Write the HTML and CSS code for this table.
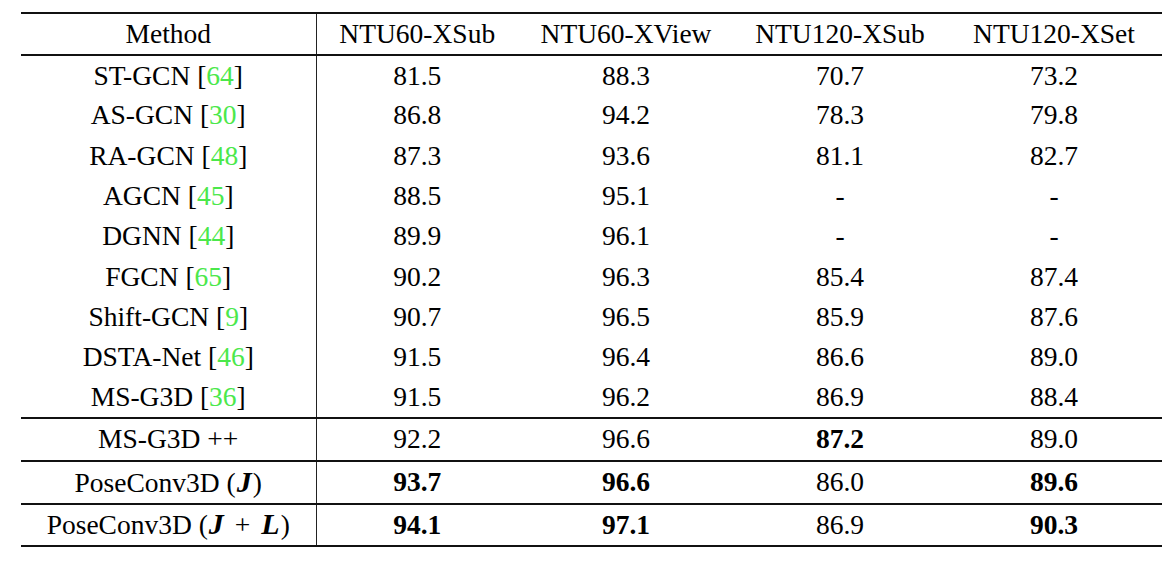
FILE: index.html
```html
<!DOCTYPE html>
<html lang="en">
<head>
    <meta charset="UTF-8">
    <title>Results on NTU RGB+D</title>
    <link rel="stylesheet" href="styles.css">
</head>
<body>
    <table class="results">
        <colgroup>
            <col class="col-method">
            <col class="col-num">
            <col class="col-wide">
            <col class="col-wide2">
            <col>
        </colgroup>
        <thead>
            <tr>
                <th class="method">Method</th>
                <th>NTU60-XSub</th>
                <th>NTU60-XView</th>
                <th>NTU120-XSub</th>
                <th>NTU120-XSet</th>
            </tr>
        </thead>
        <tbody class="prior">
            <tr><td class="method">ST-GCN [<span class="cite">64</span>]</td><td>81.5</td><td>88.3</td><td>70.7</td><td>73.2</td></tr>
            <tr><td class="method">AS-GCN [<span class="cite">30</span>]</td><td>86.8</td><td>94.2</td><td>78.3</td><td>79.8</td></tr>
            <tr><td class="method">RA-GCN [<span class="cite">48</span>]</td><td>87.3</td><td>93.6</td><td>81.1</td><td>82.7</td></tr>
            <tr><td class="method">AGCN [<span class="cite">45</span>]</td><td>88.5</td><td>95.1</td><td>-</td><td>-</td></tr>
            <tr><td class="method">DGNN [<span class="cite">44</span>]</td><td>89.9</td><td>96.1</td><td>-</td><td>-</td></tr>
            <tr><td class="method">FGCN [<span class="cite">65</span>]</td><td>90.2</td><td>96.3</td><td>85.4</td><td>87.4</td></tr>
            <tr><td class="method">Shift-GCN [<span class="cite">9</span>]</td><td>90.7</td><td>96.5</td><td>85.9</td><td>87.6</td></tr>
            <tr><td class="method">DSTA-Net [<span class="cite">46</span>]</td><td>91.5</td><td>96.4</td><td>86.6</td><td>89.0</td></tr>
            <tr><td class="method">MS-G3D [<span class="cite">36</span>]</td><td>91.5</td><td>96.2</td><td>86.9</td><td>88.4</td></tr>
        </tbody>
        <tbody class="ours">
            <tr class="sep-thin first"><td class="method">MS-G3D ++</td><td>92.2</td><td>96.6</td><td><b>87.2</b></td><td>89.0</td></tr>
            <tr class="sep-thin"><td class="method">PoseConv3D (<b class="math">J</b>)</td><td><b>93.7</b></td><td><b>96.6</b></td><td>86.0</td><td><b>89.6</b></td></tr>
            <tr class="sep-thick last"><td class="method">PoseConv3D (<b class="math">J</b><span class="op">+</span><b class="math">L</b>)</td><td><b>94.1</b></td><td><b>97.1</b></td><td>86.9</td><td><b>90.3</b></td></tr>
        </tbody>
    </table>
</body>
</html>
```

FILE: styles.css
```css
* {
    margin: 0;
    padding: 0;
    box-sizing: border-box;
}

body {
    background: #ffffff;
    color: #000000;
    font-family: 'Liberation Serif', 'Times New Roman', serif;
    font-size: 27.5px;
    padding: 12px 0 0 21px;
    overflow: hidden;
}

.results {
    border-collapse: collapse;
    width: 1141px;
    table-layout: fixed;
    border-top: 2.5px solid #111;
    border-bottom: 2.5px solid #111;
}

.col-method { width: 295px; }
.col-num { width: 202px; }
.col-wide { width: 216px; }
.col-wide2 { width: 212px; }

.results th,
.results td {
    text-align: center;
    font-weight: normal;
    white-space: nowrap;
    line-height: 38px;
    height: 40.3px;
}

.results thead th {
    height: 42px;
    border-bottom: 2px solid #111;
}

.results .method {
    border-right: 1.5px solid #222;
}

.results b {
    font-weight: bold;
}

.math {
    font-style: italic;
    font-size: 30px;
    padding: 0 1px;
}

.op {
    padding: 0 10px;
}

.cite {
    color: #4be84b;
}

.ours td {
    height: 43px;
}

.ours .first td {
    height: 43px;
}

.ours .sep-thin td {
    border-top: 2px solid #111;
}

.ours .sep-thick td {
    border-top: 2.5px solid #111;
}

.ours .last td {
    height: 42px;
}
```
